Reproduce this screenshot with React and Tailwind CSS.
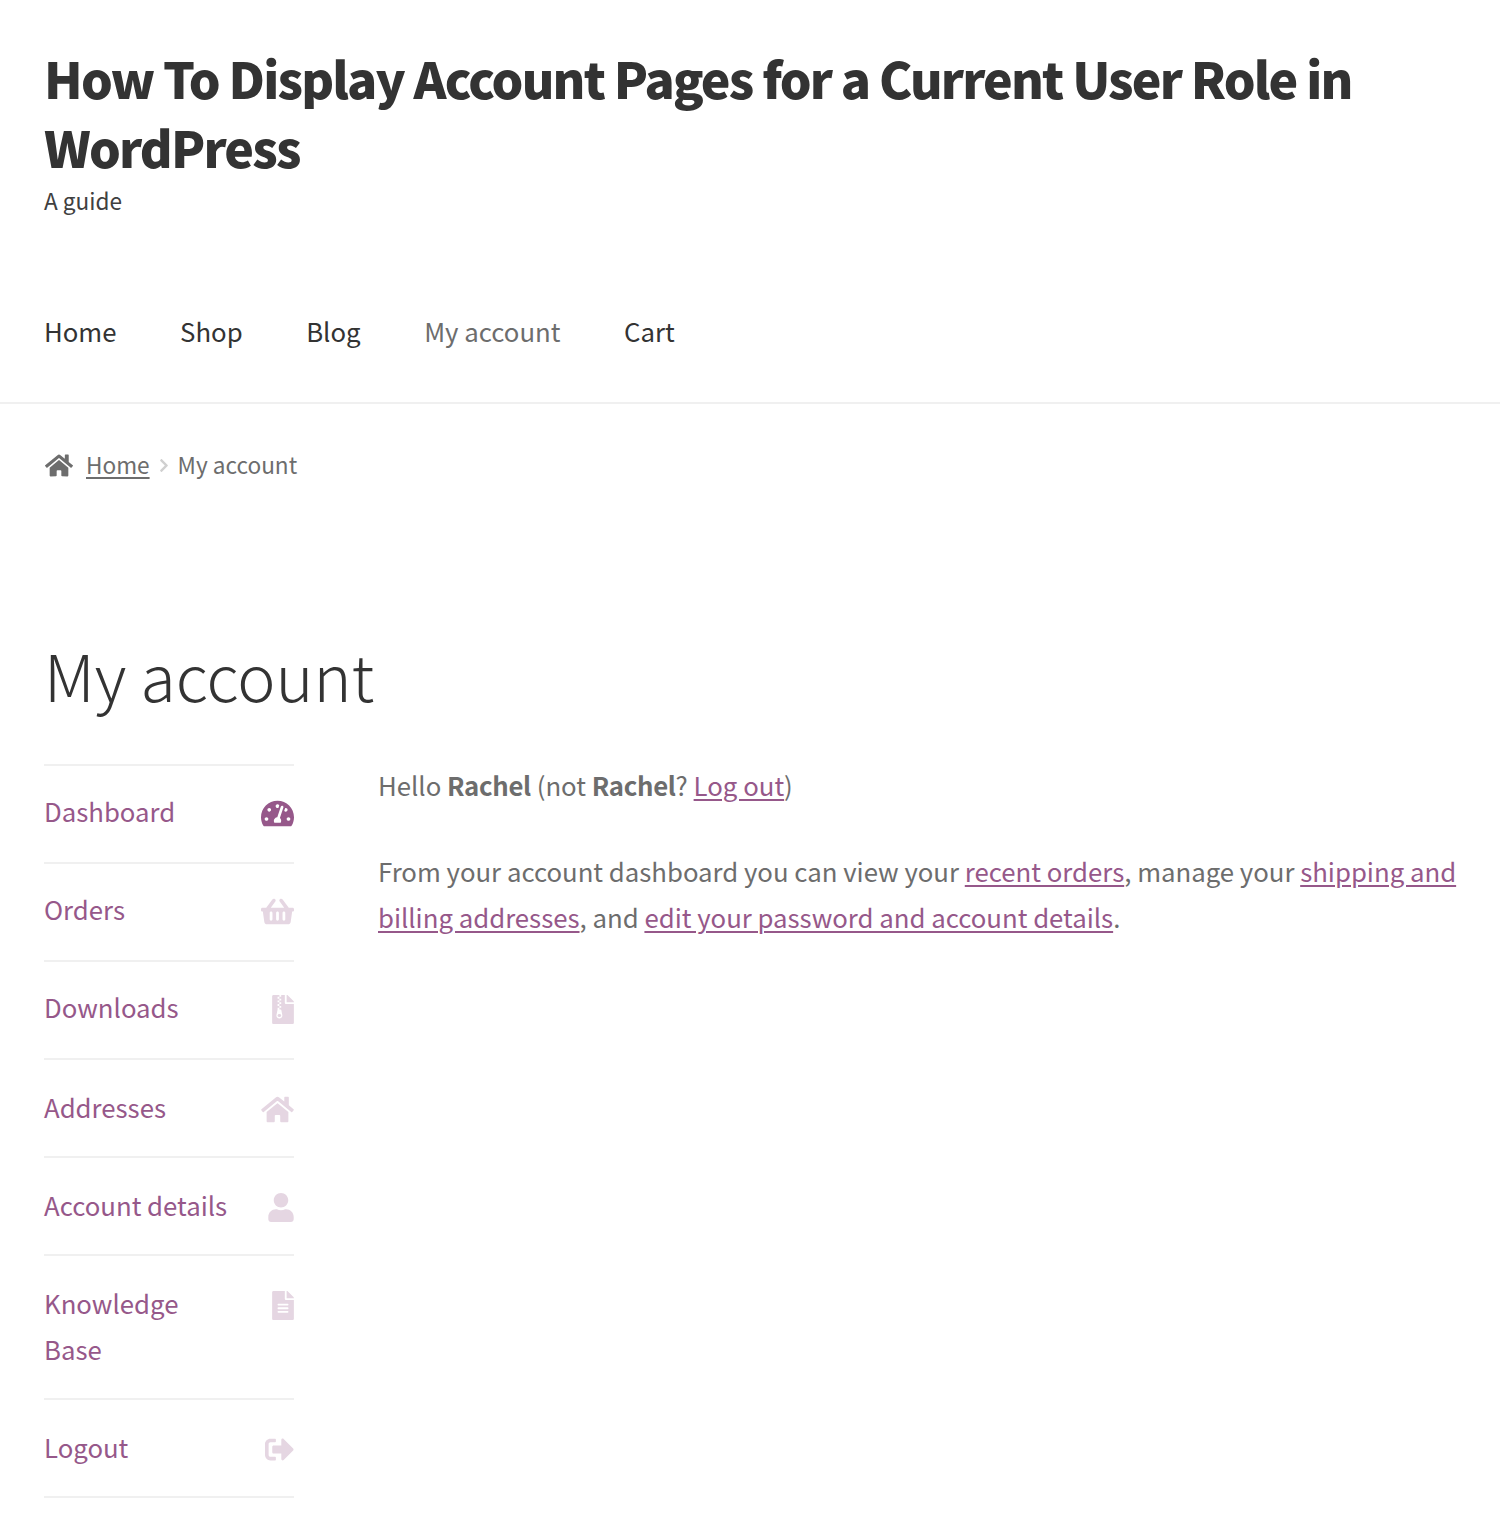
import { FaTachometerAlt, FaShoppingBasket, FaFileArchive, FaHome, FaUser, FaFileAlt, FaSignOutAlt, FaChevronRight } from 'react-icons/fa';

const sideLinks = [
  { label: 'Dashboard', icon: FaTachometerAlt, active: true, box: 'w-[33px] h-[33px]', pad: 'pt-[22px] pb-[28px]' },
  { label: 'Orders', icon: FaShoppingBasket, box: 'w-[33px] h-[33px]', pad: 'pt-[22px] pb-[28px]' },
  { label: 'Downloads', icon: FaFileArchive, box: 'w-[22px] h-[29px]', pad: 'pt-[22px] pb-[28px]' },
  { label: 'Addresses', icon: FaHome, box: 'w-[33px] h-[29px]', pad: 'pt-[24px] pb-[26px]' },
  { label: 'Account details', icon: FaUser, box: 'w-[26px] h-[29px]', pad: 'pt-[24px] pb-[26px]' },
  { label: 'Knowledge Base', icon: FaFileAlt, box: 'w-[22px] h-[29px]', pad: 'pt-[24px] pb-[26px]' },
  { label: 'Logout', icon: FaSignOutAlt, box: 'w-[29px] h-[29px]', pad: 'pt-[24px] pb-[26px]' },
];

const navLinks = ['Home', 'Shop', 'Blog', 'My account', 'Cart'];

const linkCls = 'text-[#96588a] underline decoration-2 underline-offset-[3px]';

const App = () => {
  return (
    <div className="min-h-[1522px] bg-white font-['Noto_Sans_CJK_SC','Noto_Sans',sans-serif] text-[25.75px] leading-[46px] text-[#6d6d6d]">
      <header className="border-b-2 border-[#f0f0f0]">
        <div className="px-[44px] pt-[43px]">
          <h1 className="text-[50px] leading-[69px] font-black tracking-[-1.8px] text-[#333333]">
            How To Display Account Pages for a Current User Role in WordPress
          </h1>
          <p className="mt-[2px] text-[22.6px] leading-[35px] text-[#404040]">A guide</p>
        </div>
        <nav className="mt-[90px] flex gap-[63.6px] px-[44px] pb-[48px] text-[#333333]">
          {navLinks.map((link) => (
            <a key={link} className={link === 'My account' ? 'text-[#6d6d6d]' : ''}>{link}</a>
          ))}
        </nav>
      </header>

      <div className="flex items-center px-[44px] pt-[39px] text-[22.6px] leading-[44px]">
        <FaHome className="ml-[1px] mr-[13px] h-[25px] w-[28px]" />
        <a className="underline decoration-2 underline-offset-[3px]">Home</a>
        <FaChevronRight className="mx-[8px] h-[15px] w-[12px] text-[#d0d0d0]" />
        <span>My account</span>
      </div>

      <h2 className="mt-[145px] pl-[44px] text-[64.4px] leading-[84px] font-light text-[#333333]">My account</h2>

      <div className="mt-[48px] flex pl-[44px] pr-[36px]">
        <ul className="w-[250px] shrink-0 border-t-2 border-[#f0f0f0]">
          {sideLinks.map(({ label, icon: Icon, active, box, pad }) => (
            <li key={label} className={`flex items-start justify-between border-b-2 border-[#f0f0f0] text-[#96588a] ${pad}`}>
              <a className={label === 'Knowledge Base' ? 'w-[180px]' : ''}>{label}</a>
              <span className="flex h-[46px] translate-y-[2px] items-center">
                <Icon className={`${box} ${active ? 'text-[#96588a]' : 'text-[#e5d6e2]'}`} />
              </span>
            </li>
          ))}
        </ul>
        <div className="-mt-[2px] ml-[84px] flex-1">
          <p>
            Hello <strong className="font-bold tracking-[-0.3px]">Rachel</strong> (not <strong className="font-bold tracking-[-0.3px]">Rachel</strong>?{' '}
            <a className={linkCls}>Log out</a>)
          </p>
          <p className="mt-[40px]">
            From your account dashboard you can view your{' '}
            <a className={linkCls}>recent orders</a>, manage your{' '}
            <a className={linkCls}>shipping and billing addresses</a>, and{' '}
            <a className={linkCls}>edit your password and account details</a>.
          </p>
        </div>
      </div>
    </div>
  );
};

export default App;
